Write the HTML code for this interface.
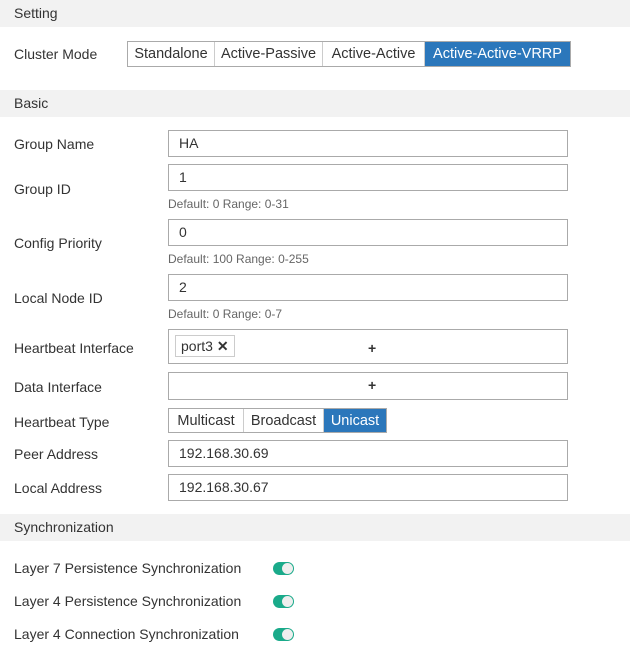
<!DOCTYPE html>
<html><head><style>
*{box-sizing:border-box;margin:0;padding:0}
body{width:630px;height:656px;background:#fff;font-family:"Liberation Sans",sans-serif;font-size:14px;color:#333;position:relative;overflow:hidden}
.a{position:absolute}
.hdr{position:absolute;left:0;width:630px;height:27px;background:#f2f2f2;padding-left:14px;line-height:27px}
.lbl{position:absolute;left:14px;line-height:20px}
.inp{position:absolute;left:168px;width:400px;border:1px solid #aaa;padding-left:10px;line-height:25px;height:27px}
.hint{position:absolute;left:168px;font-size:12px;color:#666}
.seg{position:absolute;display:flex;border:1px solid #aaa;height:26px}
.seg span{text-align:center;line-height:24px;border-right:1px solid #ccc;font-size:14.5px}
.seg span:last-child{border-right:none}
.seg .on{background:#2b77bb;color:#fff}
.tg{position:absolute;left:273px;width:21px;height:13px;border-radius:7px;background:#1aaa8a}
.tg:after{content:"";position:absolute;right:1px;top:1px;width:11px;height:11px;border-radius:50%;background:#eee}
</style></head><body>
<div class="hdr" style="top:0">Setting</div>
<div class="lbl" style="top:44px">Cluster Mode</div>
<div class="seg" style="left:127px;top:41px"><span style="width:87px">Standalone</span><span style="width:108px">Active-Passive</span><span style="width:102px">Active-Active</span><span class="on" style="width:145px">Active-Active-VRRP</span></div>
<div class="hdr" style="top:90px">Basic</div>
<div class="lbl" style="top:134px">Group Name</div>
<div class="inp" style="top:130px">HA</div>
<div class="lbl" style="top:179px">Group ID</div>
<div class="inp" style="top:164px">1</div>
<div class="hint" style="top:197px">Default: 0 Range: 0-31</div>
<div class="lbl" style="top:233px">Config Priority</div>
<div class="inp" style="top:219px">0</div>
<div class="hint" style="top:252px">Default: 100 Range: 0-255</div>
<div class="lbl" style="top:288px">Local Node ID</div>
<div class="inp" style="top:274px">2</div>
<div class="hint" style="top:307px">Default: 0 Range: 0-7</div>
<div class="lbl" style="top:338px">Heartbeat Interface</div>
<div class="inp" style="top:329px;height:35px;padding-left:6px"><span style="position:absolute;left:6px;top:5px;border:1px solid #ccc;line-height:20px;padding:0 5px">port3 <b>✕</b></span><b style="position:absolute;left:199px;top:6px">+</b></div>
<div class="lbl" style="top:377px">Data Interface</div>
<div class="inp" style="top:372px;height:28px"><b style="position:absolute;left:199px;top:0px">+</b></div>
<div class="lbl" style="top:412px">Heartbeat Type</div>
<div class="seg" style="left:168px;top:408px;height:25px"><span style="width:75px">Multicast</span><span style="width:80px">Broadcast</span><span class="on" style="width:62px">Unicast</span></div>
<div class="lbl" style="top:444px">Peer Address</div>
<div class="inp" style="top:440px">192.168.30.69</div>
<div class="lbl" style="top:478px">Local Address</div>
<div class="inp" style="top:474px">192.168.30.67</div>
<div class="hdr" style="top:514px">Synchronization</div>
<div class="lbl" style="top:558px">Layer 7 Persistence Synchronization</div><div class="tg" style="top:562px"></div>
<div class="lbl" style="top:591px">Layer 4 Persistence Synchronization</div><div class="tg" style="top:595px"></div>
<div class="lbl" style="top:624px">Layer 4 Connection Synchronization</div><div class="tg" style="top:628px"></div>
</body></html>
